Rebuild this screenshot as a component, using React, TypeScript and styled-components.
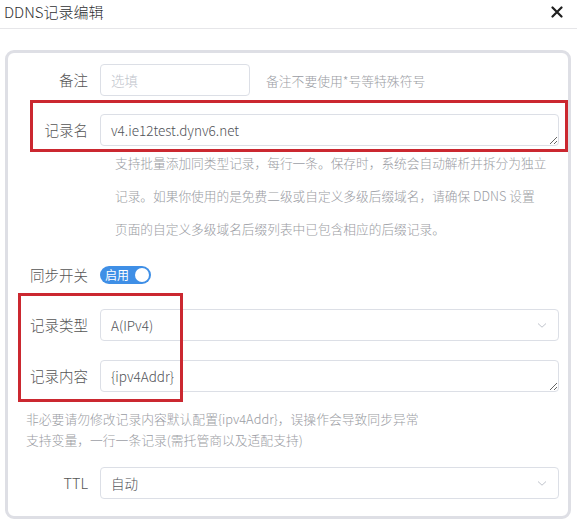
import React from 'react'
import styled, { createGlobalStyle } from 'styled-components'

const GlobalStyle = createGlobalStyle`
  html, body {
    margin: 0;
    padding: 0;
    background: #fff;
  }
  body {
    font-family: 'Noto Sans CJK SC', 'Noto Sans', sans-serif;
    color: #606266;
    width: 577px;
  }
  * {
    box-sizing: border-box;
  }
`;

const Header = styled.div`
  height: 29px;
  display: flex;
  align-items: center;
  justify-content: space-between;
  padding: 0 14px 0 4px;
  border-bottom: 1px solid #e6e6e9;
`;

const Title = styled.div`
  font-size: 15px;
  font-weight: 300;
  color: #303133;
  line-height: 20px;
  margin-top: -4px;
`;

const CloseButton = styled.button`
  border: 0;
  background: none;
  padding: 0;
  width: 12px;
  height: 12px;
  display: flex;
  margin-top: -4px;
  cursor: pointer;
`;

const Body = styled.div`
  padding: 21px 6px 0 5px;
`;

const Card = styled.div`
  position: relative;
  border: 3px solid #dedfe5;
  border-radius: 9px;
  padding: 11px 9px 17px 0;
`;

const FormItem = styled.div<{ $gap?: number }>`
  display: flex;
  align-items: center;
  min-height: 32px;
  margin-top: ${({ $gap }) => $gap ?? 0}px;
`;

const Label = styled.label`
  width: 92px;
  flex-shrink: 0;
  padding-right: 12px;
  text-align: right;
  font-size: 14.5px;
  font-weight: 300;
  color: #555;
  line-height: 32px;
`;

const Content = styled.div`
  flex: 1;
  display: flex;
  align-items: center;
  min-width: 0;
`;

const TextInput = styled.input<{ $width?: number }>`
  width: ${({ $width }) => ($width ? `${$width}px` : '100%')};
  height: 32px;
  border: 1px solid #dcdfe6;
  border-radius: 4px;
  padding: 0 10px;
  font-family: inherit;
  font-size: 13.5px;
  font-weight: 300;
  color: #606266;
  outline: none;
  &::placeholder {
    color: #c0c4cc;
  }
`;

const TextArea = styled.textarea`
  width: 100%;
  height: 32px;
  border: 1px solid #dcdfe6;
  border-radius: 4px;
  padding: 4px 10px;
  font-family: inherit;
  font-size: 13.5px;
  font-weight: 300;
  line-height: 22px;
  color: #505257;
  outline: none;
  resize: vertical;
  overflow: hidden;
  display: block;
`;

const SelectBox = styled.div`
  width: 100%;
  height: 32px;
  border: 1px solid #dcdfe6;
  border-radius: 4px;
  padding: 0 10px;
  display: flex;
  align-items: center;
  justify-content: space-between;
  font-size: 13.5px;
  font-weight: 300;
  color: #505257;
`;

const InlineTip = styled.span`
  margin-left: 16px;
  font-size: 12.8px;
  font-weight: 300;
  color: #9a9ca3;
  white-space: nowrap;
`;

const HelpText = styled.div`
  margin-left: 107px;
  font-size: 12.7px;
  font-weight: 300;
  line-height: 33px;
  color: #9a9ca3;
  white-space: nowrap;
`;

const Hint = styled.div`
  margin: 16px 0 0 18px;
  font-size: 12.8px;
  font-weight: 300;
  line-height: 21px;
  color: #9a9ca3;
  white-space: nowrap;
`;

const SwitchTrack = styled.button<{ $on: boolean }>`
  position: relative;
  width: 51px;
  height: 18px;
  border: 0;
  border-radius: 9px;
  padding: 0 0 0 5px;
  background: ${({ $on }) => ($on ? '#3f8fe6' : '#dcdfe6')};
  color: #fff;
  font-family: inherit;
  font-size: 12px;
  line-height: 18px;
  text-align: left;
  cursor: pointer;
`;

const SwitchKnob = styled.span`
  position: absolute;
  right: 2px;
  top: 2px;
  width: 14px;
  height: 14px;
  border-radius: 50%;
  background: #fff;
`;

const Highlight = styled.div`
  position: absolute;
  border: 3px solid #cb2830;
  pointer-events: none;
`;

function Chevron() {
  return (
    <svg width="12" height="12" viewBox="0 0 12 12" fill="none">
      <path d="M2 4.5 L6 8.2 L10 4.5" stroke="#c0c4cc" strokeWidth="1" />
    </svg>
  );
}

function CloseIcon() {
  return (
    <svg width="12" height="12" viewBox="0 0 12 12">
      <path d="M1.5 1.5 L10.5 10.5 M10.5 1.5 L1.5 10.5" stroke="#1f1f1f" strokeWidth="2.2" strokeLinecap="round" />
    </svg>
  );
}

export default function App() {
  const [enabled, setEnabled] = React.useState(true);

  return (
    <>
      <GlobalStyle />
      <Header>
        <Title>DDNS记录编辑</Title>
        <CloseButton aria-label="关闭">
          <CloseIcon />
        </CloseButton>
      </Header>
      <Body>
        <Card>
          <FormItem>
            <Label>备注</Label>
            <Content>
              <TextInput $width={150} placeholder="选填" />
              <InlineTip>备注不要使用*号等特殊符号</InlineTip>
            </Content>
          </FormItem>

          <FormItem $gap={18}>
            <Label>记录名</Label>
            <Content>
              <TextArea rows={1} defaultValue="v4.ie12test.dynv6.net" />
            </Content>
          </FormItem>
          <HelpText>
            支持批量添加同类型记录，每行一条。保存时，系统会自动解析并拆分为独立
            <br />
            记录。如果你使用的是免费二级或自定义多级后缀域名，请确保 DDNS 设置
            <br />
            页面的自定义多级域名后缀列表中已包含相应的后缀记录。
          </HelpText>

          <FormItem $gap={14}>
            <Label>同步开关</Label>
            <Content>
              <SwitchTrack $on={enabled} onClick={() => setEnabled(!enabled)}>
                {enabled ? '启用' : ''}
                <SwitchKnob />
              </SwitchTrack>
            </Content>
          </FormItem>

          <FormItem $gap={18}>
            <Label>记录类型</Label>
            <Content>
              <SelectBox>
                <span>A(IPv4)</span>
                <Chevron />
              </SelectBox>
            </Content>
          </FormItem>

          <FormItem $gap={19}>
            <Label>记录内容</Label>
            <Content>
              <TextArea rows={1} defaultValue="{ipv4Addr}" />
            </Content>
          </FormItem>
          <Hint>
            非必要请勿修改记录内容默认配置{'{ipv4Addr}'}，误操作会导致同步异常
            <br />
            支持变量，一行一条记录(需托管商以及适配支持)
          </Hint>

          <FormItem $gap={17}>
            <Label>TTL</Label>
            <Content>
              <SelectBox>
                <span>自动</span>
                <Chevron />
              </SelectBox>
            </Content>
          </FormItem>

          <Highlight style={{ left: 22, top: 47, width: 538, height: 52 }} />
          <Highlight style={{ left: 10, top: 240, width: 165, height: 109 }} />
        </Card>
      </Body>
    </>
  );
}
